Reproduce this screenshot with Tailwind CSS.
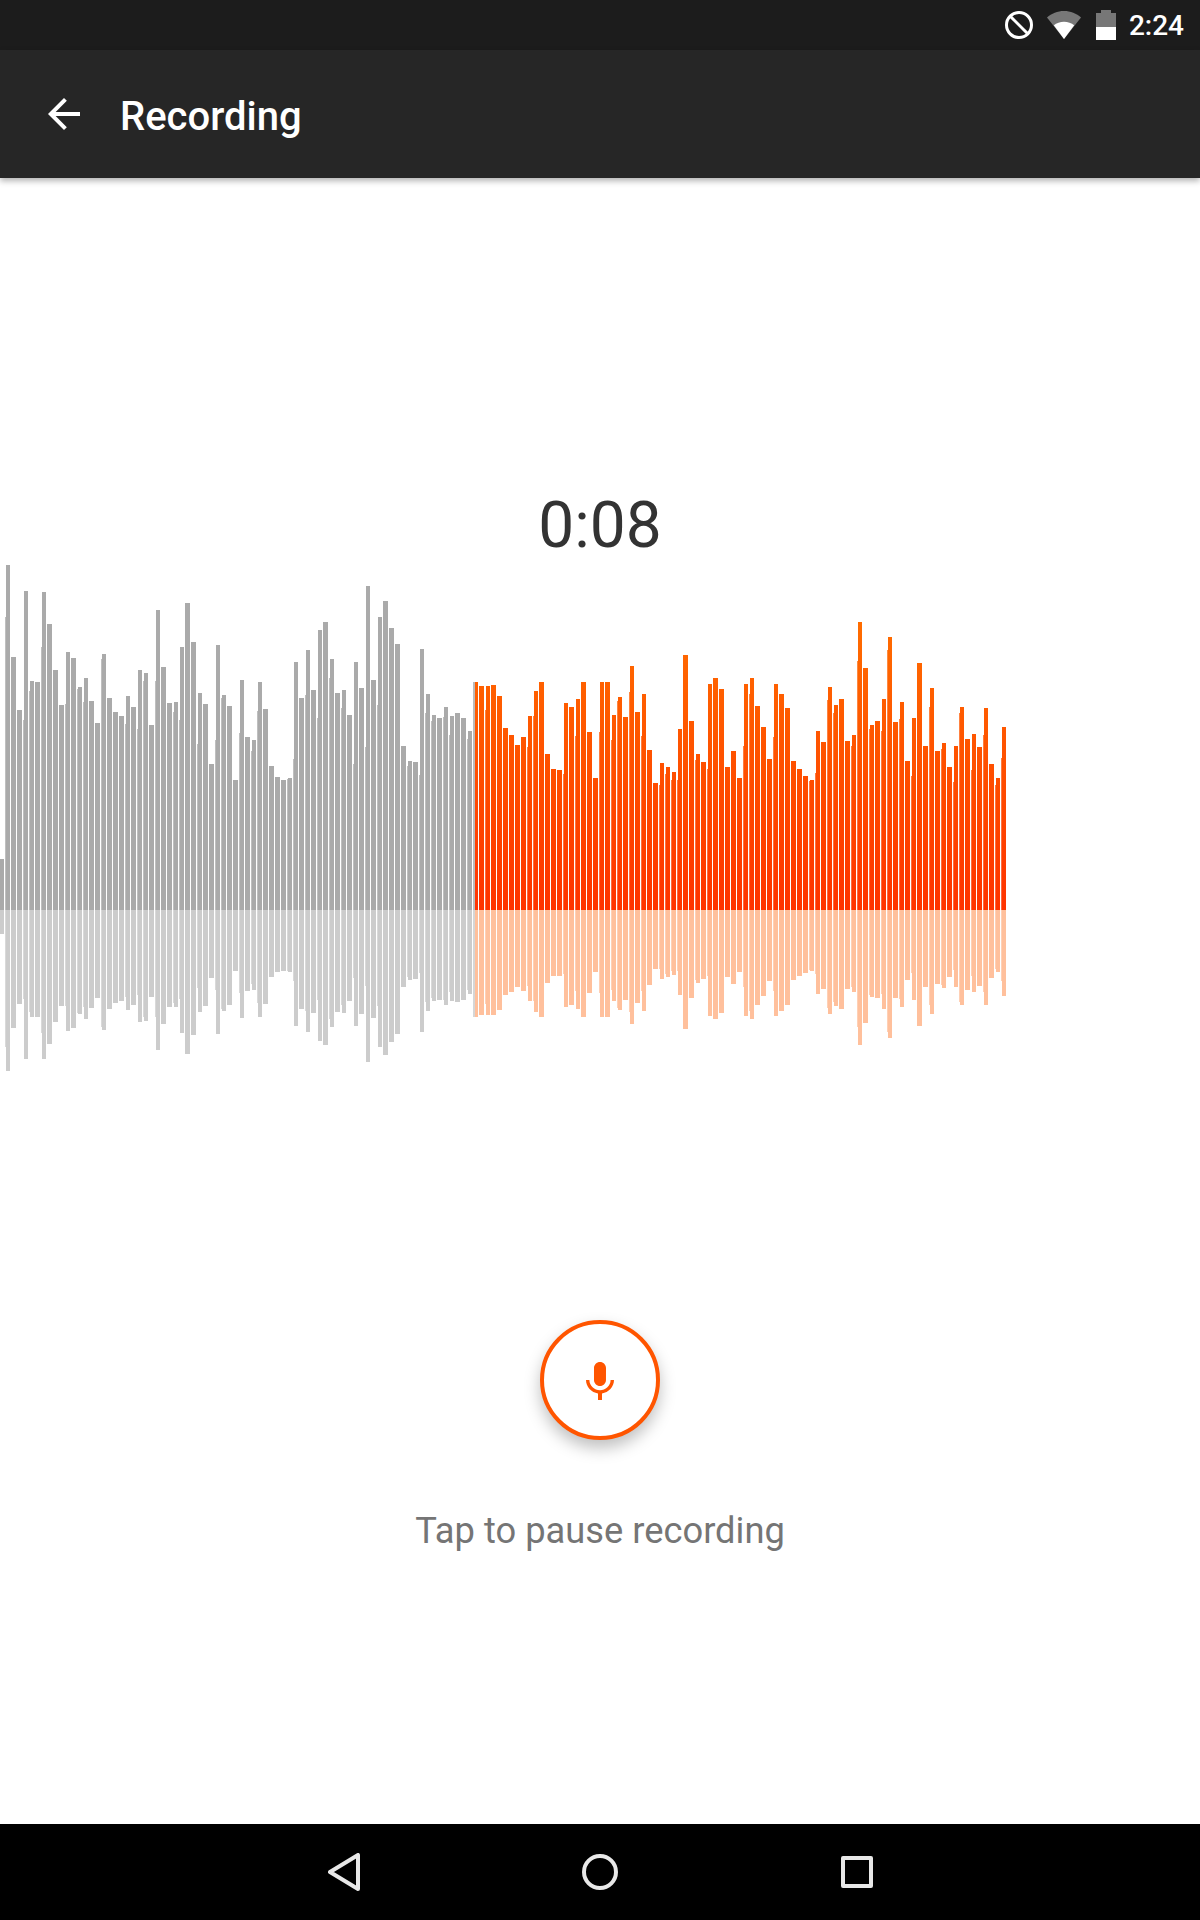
<!DOCTYPE html>
<html lang="en">
  <head>
    <meta charset="UTF-8" />
    <meta name="viewport" content="width=device-width, initial-scale=1.0" />
    <title>Recording</title>
    <script src="https://cdn.jsdelivr.net/npm/@tailwindcss/browser@4"></script>
  </head>
  <body class="bg-white font-['Roboto',sans-serif]">
    <div class="h-[1920px] flex flex-col overflow-hidden">
      <!-- Status bar -->
      <div class="h-[50px] bg-[#1c1c1c] flex items-center justify-end pr-[16px] text-white">
        <svg width="32" height="32" viewBox="0 0 32 32" fill="none" stroke="#fff" stroke-width="3" class="mr-[11px]">
          <circle cx="16" cy="16" r="12.5" />
          <path d="M7.5 7.5l17 17" />
        </svg>
        <svg width="36" height="30" viewBox="0 0 36 30" class="mr-[14px]">
          <path d="M18 29L1 7.5C5.5 3.5 11.500 1 18 1s12.500 2.500 17 6.500z" fill="#777" />
          <path d="M18 29L7.800 15.300C10.600 13 14.200 11.700 18 11.700s7.400 1.300 10.200 3.600z" fill="#fff" />
        </svg>
        <svg width="20" height="30" viewBox="0 0 20 30" class="mr-[13px]">
          <path d="M0 3h5V0h10v3h5v17H0z" fill="#777" />
          <path d="M0 17h20v13H0z" fill="#fff" />
        </svg>
        <span class="pt-[2px] text-[28px] font-medium leading-none">2:24</span>
      </div>

      <!-- App bar -->
      <div class="relative z-10 h-[128px] bg-[#262626] flex items-center pl-[40px] shadow-[0_3px_6px_rgba(0,0,0,0.3)]">
        <svg width="48" height="48" viewBox="0 0 24 24" fill="#fff" class="mr-[32px]">
          <path d="M20 11H7.830l5.590-5.590L12 4l-8 8 8 8 1.410-1.410L7.830 13H20v-2z" />
        </svg>
        <span class="pt-[6px] text-[40px] font-medium text-white leading-none">Recording</span>
      </div>

      <!-- Timer -->
      <div class="pt-[314px] h-[382px] text-center text-[64px] leading-[68px] text-[#333333]">0:08</div>

      <!-- Waveform -->
      <svg id="wave" width="1200" height="520" viewBox="0 560 1200 520" class="block shrink-0">
        <defs>
          <linearGradient id="hot" gradientUnits="userSpaceOnUse" x1="0" y1="620" x2="0" y2="910">
            <stop offset="0" stop-color="#ff6d00" />
            <stop offset="1" stop-color="#ff3300" />
          </linearGradient>
        </defs>
      </svg>

      <!-- Record button -->
      <div class="mt-[240px] flex justify-center">
        <button class="w-[120px] h-[120px] rounded-full bg-white border-[4px] border-[#ff5500] flex items-center justify-center shadow-[0_8px_16px_rgba(0,0,0,0.25)]">
          <svg width="48" height="48" viewBox="0 0 24 24" fill="#ff5500" class="mt-[4px]">
            <path d="M12 14c1.660 0 2.990-1.340 2.990-3L15 5c0-1.660-1.340-3-3-3S9 3.340 9 5v6c0 1.660 1.340 3 3 3zm5.300-3c0 3-2.540 5.100-5.300 5.100S6.700 14 6.700 11H5c0 3.410 2.720 6.230 6 6.720V21h2v-3.280c3.280-.48 6-3.300 6-6.720h-1.700z" />
          </svg>
        </button>
      </div>
      <div class="mt-[67px] text-center text-[36.3px] leading-[48px] text-[#757575]">Tap to pause recording</div>

      <!-- Nav bar -->
      <div class="mt-auto h-[96px] bg-black flex items-center justify-center">
        <svg width="32" height="38" viewBox="0 0 32 38" fill="none" stroke="#e8e8e8" stroke-width="4" stroke-linejoin="round" class="mr-[222px]">
          <path d="M2 19L30 2v34z" />
        </svg>
        <svg width="36" height="36" viewBox="0 0 36 36" fill="none" stroke="#e8e8e8" stroke-width="4">
          <circle cx="18" cy="18" r="16" />
        </svg>
        <svg width="32" height="32" viewBox="0 0 32 32" fill="none" stroke="#e8e8e8" stroke-width="4" stroke-linejoin="round" class="ml-[223px]">
          <rect x="2" y="2" width="28" height="28" />
        </svg>
      </div>
    </div>

    <script>
      // bar tops in page pixels: main, or main/leftColumn where the 1px left column differs
      const tops = ("565/617 657 710 591/720 681/691 682 592/647 624 670 705 652/704 658 687/689 678/702 701 723 654/659 698 712 716 696/724 707 670/729 673/681 725 610/681 667 703 702/712 647/720 603 642 693/744 704 764 645/740 695/698 706 780 680/733 737 " +
        "740/751 682/711 709 766 777 780 778/779 662/759 698 650/695 690 630/718 622 659/678 693 690/708 715 662/764 688 586/747 680 617/705 601 628 644 746 761/766 762 649/775 694/713 715/721 718 707/717 716/735 713 718 731/739 " +
        "682 686 686/710 685 696 728 735 745 737 716/747 691/716 682 754 769 770 703/774 707 699/736 682 732 778 682/732 682 715/740 697/701 717 666/692 712 694/736 750 783 763/785 767/774 772/780 729/780 655 721 754/760 762 684/769 678 689 767 " +
        "751 778 684/746 678/694 706 727 759 684/737 694 708 761 769 776 780/781 731/773 742 687/700 705/713 699 741 735/746 622/661 668 725/729 721 699/731 637/650 722 702/719 761 718/776 663 746 688/707 751 743/749 767 746/782 707/713 739 734/770 747 708/735 764 778/785 727/758").split(" ");

      const BASE = 910;
      const SHADOW = 0.468; // reflection height as a share of the bar height
      const ORANGE_FROM = 79; // first orange bar
      const wave = document.getElementById("wave");

      function rect(x, y, w, h, fill, opacity) {
        const r = document.createElementNS("http://www.w3.org/2000/svg", "rect");
        r.setAttribute("x", x);
        r.setAttribute("y", y);
        r.setAttribute("width", w);
        r.setAttribute("height", h);
        r.setAttribute("fill", fill);
        if (opacity) r.setAttribute("opacity", opacity);
        wave.appendChild(r);
      }

      function bar(x, w, top, hot, opacity) {
        const h = BASE - top;
        rect(x, top, w, h, hot ? "url(#hot)" : "#aaaaaa", opacity);
        rect(x, BASE, w, Math.round(h * SHADOW), hot ? "#ffc09c" : "#cccccc", opacity);
      }

      // stub at the very left edge
      bar(0, 4, 859, false);

      tops.forEach(function (entry, i) {
        const parts = entry.split("/").map(Number);
        const x = 5 + i * 6;
        const hot = i + 1 >= ORANGE_FROM;
        if (i + 1 === ORANGE_FROM) {
          // the join: left part of this bar is still grey
          bar(x, 2, parts[0], false, 0.8);
          bar(x + 2, 3, parts[0], true);
        } else if (parts[1]) {
          bar(x, 1, parts[1], hot, 0.75);
          bar(x + 1, 4, parts[0], hot);
        } else {
          bar(x, 5, parts[0], hot);
        }
      });
    </script>
  </body>
</html>
